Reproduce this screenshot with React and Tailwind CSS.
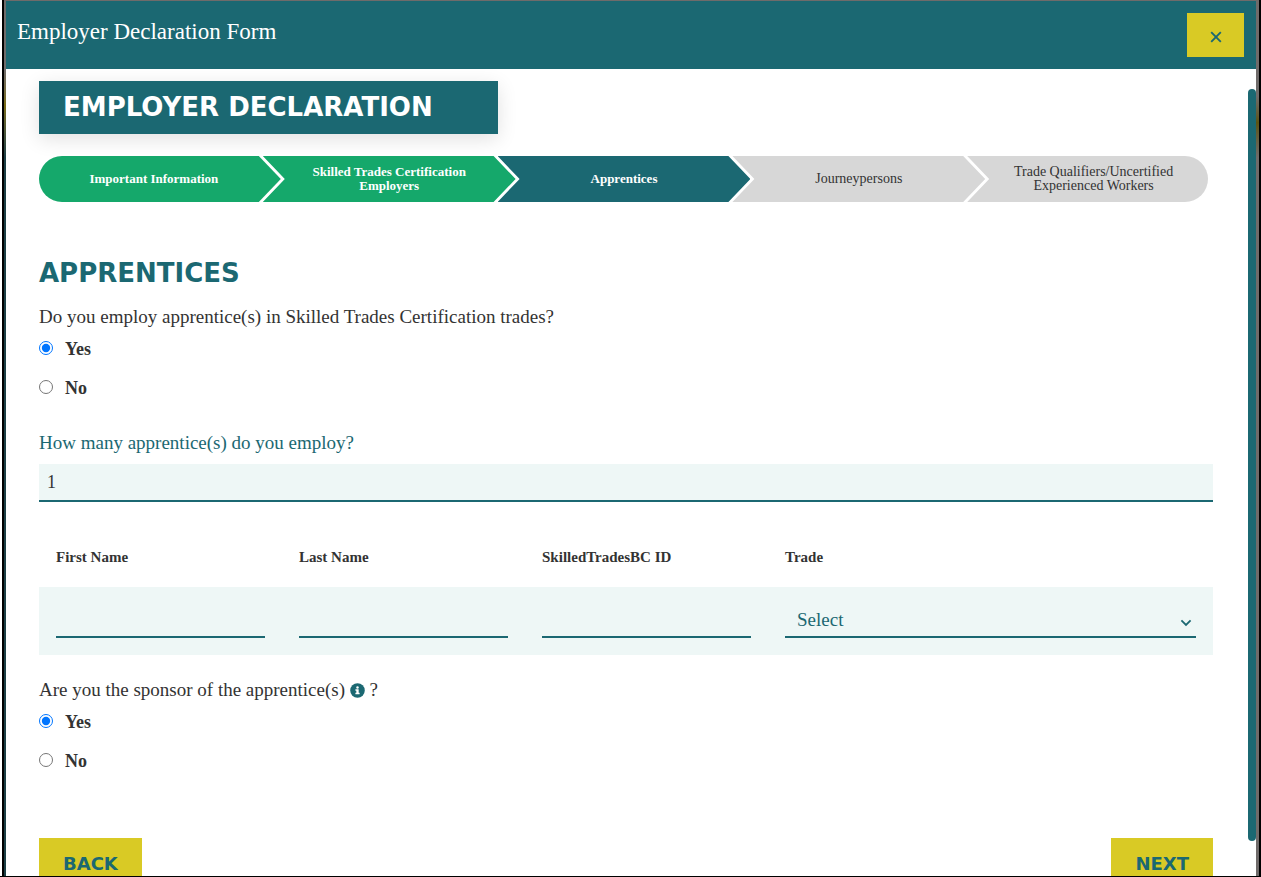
import { useState } from "react";

const STEPS = [
  { label: "Important Information", state: "done" },
  { label: "Skilled Trades Certification Employers", state: "done" },
  { label: "Apprentices", state: "current" },
  { label: "Journeypersons", state: "todo" },
  { label: "Trade Qualifiers/Uncertified Experienced Workers", state: "todo" },
];

const STEP_COLORS = {
  done: "bg-[#15a86b] text-[13px] text-white font-bold",
  current: "bg-[#1b6872] text-[13px] text-white font-bold",
  todo: "bg-[#d7d7d7] text-[14px] text-[#333333]",
};

function stepShape(index) {
  if (index === 0)
    return "-mr-[7px] pl-7 pr-10 rounded-l-full [clip-path:polygon(0_0,calc(100%-22px)_0,100%_50%,calc(100%-22px)_100%,0_100%)]";
  if (index === STEPS.length - 1)
    return "-ml-[11px] mr-[5px] pl-10 pr-7 rounded-r-full [clip-path:polygon(0_0,100%_0,100%_100%,0_100%,22px_50%)]";
  return "-ml-[11px] -mr-[7px] px-9 [clip-path:polygon(0_0,calc(100%-22px)_0,100%_50%,calc(100%-22px)_100%,0_100%,22px_50%)]";
}

function Steps() {
  return (
    <ol className="mt-[22px] flex">
      {STEPS.map((step, i) => (
        <li key={step.label} className="min-w-0 flex-1" aria-current={step.state === "current" ? "step" : undefined}>
          <div
            className={`flex h-[46px] items-center justify-center text-center leading-[14px] ${STEP_COLORS[step.state]} ${stepShape(i)}`}
          >
            {step.label}
          </div>
        </li>
      ))}
    </ol>
  );
}

function YesNo({ name, legend }) {
  const [value, setValue] = useState("yes");
  return (
    <fieldset>
      <legend className="text-[19px] leading-6 text-[#333333]">{legend}</legend>
      <div className="mt-2 flex flex-col gap-[15px]">
        {["Yes", "No"].map((option) => {
          const id = `${name}-${option.toLowerCase()}`;
          return (
            <div key={id} className="flex h-6 items-start gap-3">
              <input
                type="radio"
                id={id}
                name={name}
                checked={value === option.toLowerCase()}
                onChange={() => setValue(option.toLowerCase())}
                className="mt-1 size-[14px] accent-[#0075ff]"
              />
              <label htmlFor={id} className="text-[18px] leading-6 font-bold text-[#333333]">
                {option}
              </label>
            </div>
          );
        })}
      </div>
    </fieldset>
  );
}

function InfoIcon() {
  return (
    <svg viewBox="0 0 512 512" className="inline-block size-[15px] align-[-2px]" role="img" aria-label="More information">
      <circle cx="256" cy="256" r="248" fill="#1b6872" />
      <circle cx="256" cy="152" r="42" fill="#fff" />
      <path
        fill="#fff"
        d="M196 216h88c7 0 12 5 12 12v108h20c7 0 12 5 12 12v28c0 7-5 12-12 12H196c-7 0-12-5-12-12v-28c0-7 5-12 12-12h20v-68h-20c-7 0-12-5-12-12v-28c0-7 5-12 12-12z"
      />
    </svg>
  );
}

const CELL_INPUT = "block h-[34px] w-full border-b-2 border-[#1b6872] bg-transparent px-3 text-[18px] text-[#333333] outline-none";

export default function App() {
  return (
    <div className="flex h-screen overflow-hidden border-b border-black bg-white font-['Liberation_Serif',serif]">
      <div className="ml-[2px] w-[2px] bg-black" />
      <div className="w-[2px] bg-linear-to-b from-[#6f6b6a] from-8% via-[#7a6c12] via-12% to-[#1c3f45] to-18%" />

      <main className="flex min-w-0 flex-1 flex-col border-t border-[#6f6b6a]">
        <header className="flex h-[68px] shrink-0 items-start justify-between bg-[#1b6872] pt-3 pr-3 pl-[11px]">
          <h1 className="pt-1 text-[23px] leading-[30px] text-white">Employer Declaration Form</h1>
          <button type="button" aria-label="Close" className="flex h-11 w-[57px] items-center justify-center bg-[#d9ca25]">
            <svg viewBox="0 0 12 12" className="mt-1 size-3" fill="none" stroke="#1b6872" strokeWidth="1.9">
              <path d="M1.200 1.200l9.600 9.600M10.800 1.200l-9.600 9.600" />
            </svg>
          </button>
        </header>

        <div className="flex min-h-0 flex-1">
          <form className="min-w-0 flex-1 overflow-y-auto pt-3 pr-[35px] pl-[33px] [scrollbar-width:none]">
            <h2 className="flex h-[53px] w-fit items-center bg-[#1b6872] pr-[65px] pl-6 font-['DejaVu_Sans',sans-serif] text-[26px] font-bold text-white uppercase shadow-[0_5px_20px_rgba(0,0,0,0.12)]">
              Employer Declaration
            </h2>

            <Steps />

            <h3 className="mt-[55px] mb-[16px] font-['DejaVu_Sans',sans-serif] text-[26px] leading-[32px] font-bold text-[#1b6872] uppercase">
              Apprentices
            </h3>

            <YesNo name="employ" legend="Do you employ apprentice(s) in Skilled Trades Certification trades?" />

            <div className="mt-[31px] flex flex-col gap-[9px]">
              <label htmlFor="count" className="text-[19px] leading-6 text-[#1b6872]">
                How many apprentice(s) do you employ?
              </label>
              <input
                id="count"
                type="text"
                inputMode="numeric"
                defaultValue="1"
                className="h-[38px] w-full border-b-2 border-[#1b6872] bg-[#eef7f6] px-2 text-[18px] text-[#333333] outline-none"
              />
            </div>

            <table className="mt-[35px] w-full table-fixed text-left">
              <thead>
                <tr className="h-[50px] align-top text-[15px] leading-10 text-[#333333]">
                  <th scope="col" className="w-[20.7%] px-[17px] font-bold">First Name</th>
                  <th scope="col" className="w-[20.7%] px-[17px] font-bold">Last Name</th>
                  <th scope="col" className="w-[20.7%] px-[17px] font-bold">SkilledTradesBC ID</th>
                  <th scope="col" className="px-[17px] font-bold">Trade</th>
                </tr>
              </thead>
              <tbody>
                <tr className="h-[68px] bg-[#eef7f6]">
                  <td className="px-[17px]">
                    <input type="text" aria-label="First Name" className={CELL_INPUT} />
                  </td>
                  <td className="px-[17px]">
                    <input type="text" aria-label="Last Name" className={CELL_INPUT} />
                  </td>
                  <td className="px-[17px]">
                    <input type="text" aria-label="SkilledTradesBC ID" className={CELL_INPUT} />
                  </td>
                  <td className="px-[17px]">
                    <div className="relative">
                      <select
                        aria-label="Trade"
                        className="block h-[34px] w-full appearance-none border-b-2 border-[#1b6872] bg-transparent px-3 text-[19px] text-[#1b6872] outline-none"
                      >
                        <option>Select</option>
                      </select>
                      <svg
                        viewBox="0 0 12 8"
                        className="pointer-events-none absolute top-[15px] right-1 h-2 w-3"
                        fill="none"
                        stroke="#1b6872"
                        strokeWidth="1.8"
                      >
                        <path d="M1.400 1.400L6 6l4.600-4.600" />
                      </svg>
                    </div>
                  </td>
                </tr>
              </tbody>
            </table>

            <div className="mt-[23px]">
              <YesNo
                name="sponsor"
                legend={
                  <>
                    Are you the sponsor of the apprentice(s) <InfoIcon /> ?
                  </>
                }
              />
            </div>

            <div className="mt-[65px] flex justify-between font-['DejaVu_Sans',sans-serif] text-[18px] font-bold text-[#1b6872]">
              <button type="button" className="h-[50px] bg-[#d9ca25] px-6 uppercase">Back</button>
              <button type="button" className="h-[50px] bg-[#d9ca25] px-6 uppercase">Next</button>
            </div>
          </form>

          <div className="flex w-2 flex-col pt-5 pb-[35px]" aria-hidden="true">
            <div className="flex-1 rounded-full bg-[#1b6872]" />
          </div>
        </div>
      </main>

      <div className="w-[3px] bg-linear-to-b from-[#6f6b6a] from-11% via-[#5c5410] via-14% to-[#6f6b6a] to-18%" />
      <div className="w-[2px] bg-black" />
    </div>
  );
}
